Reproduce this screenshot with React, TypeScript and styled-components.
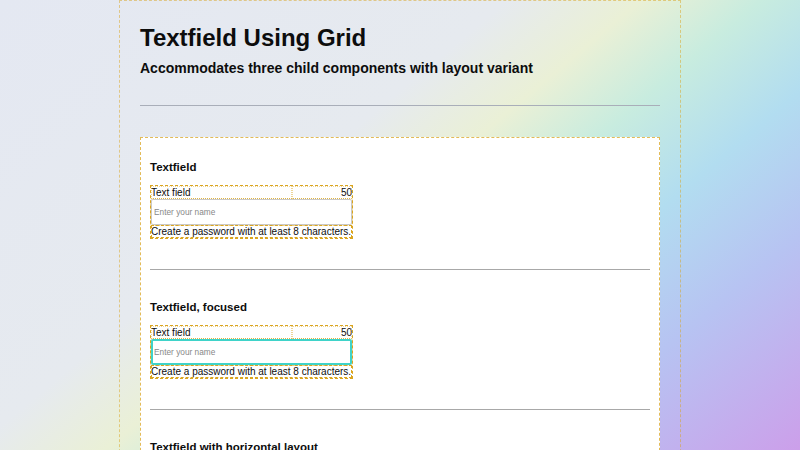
import React from "react";
import styled, { createGlobalStyle, css } from "styled-components";

const GlobalStyle = createGlobalStyle`
  html, body {
    margin: 0;
    padding: 0;
  }

  body {
    min-height: 100vh;
    font-family: "Liberation Sans", Arial, sans-serif;
    color: #111;
    background: linear-gradient(
        140deg,
        #e4e8f2 0%,
        #e6eaef 38%,
        #eaf0d6 48%,
        #c8ecdf 57%,
        #b2ddf0 68%,
        #b7c3f2 81%,
        #cc9fea 100%
      )
      fixed;
  }
`;

const Page = styled.main`
  max-width: 520px;
  margin: 0 auto;
  padding: 20px;
  border: 1px dashed rgba(218, 165, 32, 0.5);
`;

const Title = styled.h1`
  margin: 3px 0 0;
  font-size: 24px;
  font-weight: bold;
  color: #0d0d0d;
`;

const Subtitle = styled.h2`
  margin: 8px 0 0;
  font-size: 14px;
  font-weight: bold;
  color: #0d0d0d;
`;

const Rule = styled.hr`
  margin: 29px 0 31px;
  border: 0;
  border-top: 1px solid #a9aeb9;
`;

const Card = styled.section`
  background: #fff;
  border: 1px dashed rgba(218, 165, 32, 0.75);
  padding: 23px 9px 9px;
`;

const Divider = styled.hr`
  margin: 30px 0 31px;
  border: 0;
  border-top: 1px solid #a8a8a8;
`;

const ExampleTitle = styled.h3`
  margin: 0 0 12px;
  font-size: 11.5px;
  font-weight: bold;
  color: #0d0d0d;
`;

const FieldGrid = styled.div<{ $horizontal?: boolean }>`
  display: grid;
  width: max-content;
  border: 1px dashed #daa520;
  font-size: 10px;
  color: #0d0d0d;
  ${({ $horizontal }) =>
    $horizontal
      ? css`
          grid-template-columns: auto 140px auto;
          grid-template-areas:
            "label input counter"
            ". helper helper";
          column-gap: 6px;
          align-items: center;
        `
      : css`
          grid-template-columns: 70% 30%;
          grid-template-areas:
            "label counter"
            "input input"
            "helper helper";
        `}
`;

const Cell = styled.div`
  outline: 1px dotted rgba(218, 165, 32, 0.45);
  outline-offset: -1px;
`;

const Label = styled(Cell).attrs({ as: "label" })`
  grid-area: label;
  line-height: 13px;
`;

const Counter = styled(Cell)`
  grid-area: counter;
  text-align: right;
  line-height: 13px;
`;

const Helper = styled(Cell)`
  grid-area: helper;
  line-height: 13px;
  padding-right: 1px;
  outline: 1px dashed #daa520;
`;

const Input = styled.input<{ $focused?: boolean }>`
  grid-area: input;
  box-sizing: border-box;
  width: 100%;
  height: 26px;
  margin: 0;
  padding: 0 2px;
  font-family: "Liberation Sans", Arial, sans-serif;
  font-size: 8.3px;
  color: #111;
  background: #fff;
  border-radius: 2px;
  outline: 1px dotted rgba(218, 165, 32, 0.7);
  ${({ $focused }) =>
    $focused
      ? css`
          border: 2px solid #3fd3c9;
          padding-left: 1px;
        `
      : css`
          border: 1px solid #c9c9c9;
        `}

  &::placeholder {
    color: #888;
  }
`;

type FieldProps = {
  focused?: boolean;
  horizontal?: boolean;
};

function Textfield({ focused, horizontal }: FieldProps) {
  return (
    <FieldGrid $horizontal={horizontal}>
      <Label>Text field</Label>
      <Counter>50</Counter>
      <Input $focused={focused} placeholder="Enter your name" readOnly />
      <Helper>Create a password with at least 8 characters.</Helper>
    </FieldGrid>
  );
}

const examples = [
  { title: "Textfield" },
  { title: "Textfield, focused", focused: true },
  { title: "Textfield with horizontal layout", horizontal: true },
];

export default function App() {
  return (
    <>
      <GlobalStyle />
      <Page>
        <Title>Textfield Using Grid</Title>
        <Subtitle>Accommodates three child components with layout variant</Subtitle>
        <Rule />
        <Card>
          {examples.map((ex, i) => (
            <div key={ex.title}>
              {i > 0 && <Divider />}
              <ExampleTitle>{ex.title}</ExampleTitle>
              <Textfield focused={ex.focused} horizontal={ex.horizontal} />
            </div>
          ))}
        </Card>
      </Page>
    </>
  );
}
